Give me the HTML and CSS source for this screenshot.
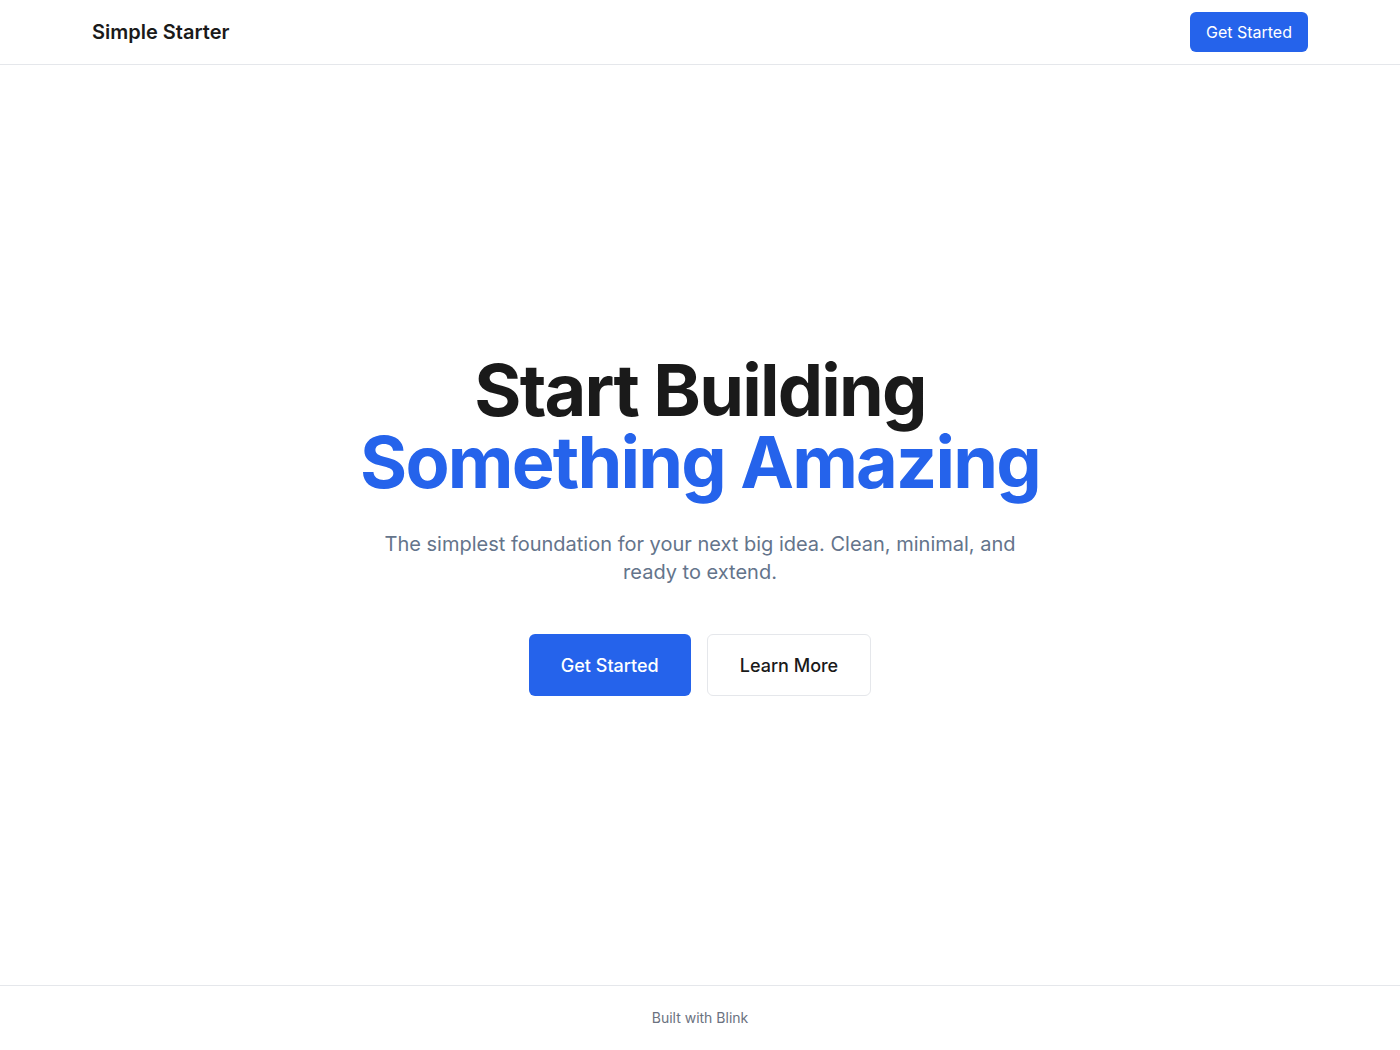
FILE: index.html
```html
<!DOCTYPE html>
<html lang="en">
<head>
<meta charset="utf-8">
<title>Simple Starter</title>
<link rel="stylesheet" href="styles.css">
</head>
<body>
<div class="page">
  <header class="header">
    <div class="container header-inner">
      <div class="logo">Simple Starter</div>
      <a class="btn btn-primary btn-sm" href="#">Get Started</a>
    </div>
  </header>
  <main class="main">
    <section class="hero">
      <h1 class="title">Start Building<br><span class="accent">Something Amazing</span></h1>
      <p class="lead">The simplest foundation for your next big idea. Clean, minimal, and ready to extend.</p>
      <div class="actions">
        <a class="btn btn-primary btn-lg btn-lg-primary" href="#">Get Started</a>
        <a class="btn btn-outline btn-lg" href="#">Learn More</a>
      </div>
    </section>
  </main>
  <footer class="footer">
    <p class="footer-text">Built with Blink</p>
  </footer>
</div>
</body>
</html>
```

FILE: styles.css
```css
* { box-sizing: border-box; }
html, body { margin: 0; padding: 0; }
body {
  font-family: Inter, "Noto Sans", sans-serif;
  color: #1a1a1a;
  background: #fff;
  -webkit-font-smoothing: antialiased;
}
.page {
  min-height: 100vh;
  display: flex;
  flex-direction: column;
}
.container {
  max-width: 1280px;
  margin: 0 auto;
  padding: 0 32px;
  width: 100%;
}
.header {
  border-bottom: 1px solid #e5e7eb;
}
.header-inner {
  height: 64px;
  display: flex;
  align-items: center;
  justify-content: space-between;
}
.logo {
  font-size: 20px;
  font-weight: 600;
  color: #1a1a1a;
}
.btn {
  display: inline-flex;
  align-items: center;
  justify-content: center;
  text-decoration: none;
  font-weight: 500;
  border-radius: 6px;
  border: 1px solid transparent;
}
.btn-primary {
  background: #2563eb;
  color: #fff;
}
.btn-outline {
  background: #fff;
  color: #1a1a1a;
  border-color: #e5e7eb;
}
.btn-sm {
  height: 40px;
  padding: 0 15px;
  font-size: 16px;
  font-weight: 400;
}
.btn-lg {
  height: 62px;
  padding: 0 32px;
  font-size: 18px;
}
.btn-lg-primary {
  padding: 0 31px;
}
.main {
  flex: 1;
  display: flex;
  align-items: center;
  justify-content: center;
}
.hero {
  text-align: center;
  padding: 0 32px;
}
.title {
  margin: 0;
  font-size: 72px;
  line-height: 72px;
  font-weight: 700;
  letter-spacing: -0.025em;
  color: #1a1a1a;
}
.accent { color: #2563eb; }
.lead {
  margin: 32px auto 0;
  max-width: 672px;
  font-size: 20px;
  line-height: 28px;
  color: #64748b;
}
.actions {
  margin-top: 48px;
  display: flex;
  justify-content: center;
  gap: 16px;
}
.footer {
  border-top: 1px solid #e5e7eb;
  padding: 22px 0;
}
.footer-text {
  margin: 0;
  text-align: center;
  font-size: 14px;
  line-height: 20px;
  color: #6b7280;
}
```
